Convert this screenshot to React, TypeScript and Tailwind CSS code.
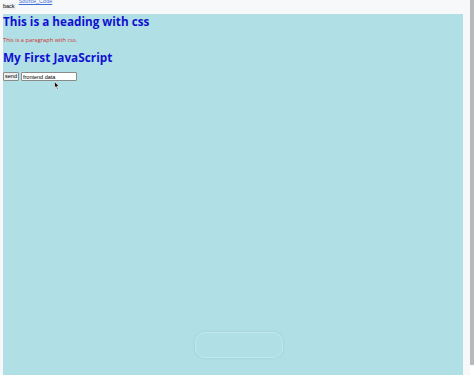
import React from 'react';

export default function App() {
  return (
    <div className="flex h-[375px] w-[474px] overflow-hidden bg-white" style={{ fontFamily: '"Open Sans", "Noto Sans", sans-serif' }}>
      <div className="flex flex-1 flex-col bg-[#f7f8f9]">
        <div className="flex h-[14px] items-start gap-[3px] pl-[2px]" style={{ fontFamily: '"Liberation Sans", sans-serif' }}>
          <button className="mt-[3px] h-[7px] rounded-[1px] bg-[#eef0f1] px-[1px] text-[5.5px] leading-[7px] text-black">
            back
          </button>
          <a className="-mt-[2px] text-[5.5px] leading-[7px] text-[#3b6fd8] underline">
            Source_Code
          </a>
        </div>
        <div className="relative ml-[3px] mr-[7px] flex-1 bg-[#b0e0e6]">
          <h1 className="text-[11.7px] font-bold leading-[15px] text-[#1010d0]">This is a heading with css</h1>
          <p className="mt-[7px] text-[5.7px] leading-[8px] text-[#d03030]">This is a paragraph with css.</p>
          <h2 className="mt-[5px] text-[11.8px] font-bold leading-[16px] text-[#1010d0]">My First JavaScript</h2>
          <div className="mt-[7px] flex items-center gap-[2px]" style={{ fontFamily: '"Liberation Sans", sans-serif' }}>
            <button className="h-[9px] w-[16px] rounded-[1px] border border-[#8a8a8a] bg-[#efefef] p-0 text-[5.5px] leading-[7px] text-black">send</button>
            <input
              readOnly
              value="frontend data"
              className="h-[9px] w-[56px] rounded-[1px] border border-[#8a8a8a] bg-white px-[1px] py-0 text-[5.5px] leading-[7px] text-black outline-none"
            />
          </div>
          <svg className="absolute left-[51px] top-[67px]" width="6" height="9" viewBox="0 0 6 9">
            <path d="M0.5 0.5 L0.5 7 L2 5.6 L3.2 8.3 L4.2 7.9 L3 5.3 L5 5.2 Z" fill="#111" stroke="#fff" strokeWidth="0.6" />
          </svg>
          <div className="absolute left-[192px] top-[318px] h-[26px] w-[88px] rounded-[10px] border border-[#c2e8ec] shadow-[0_0_3px_rgba(120,170,175,0.35)]" />
        </div>
      </div>
      <div className="flex w-[4px] flex-col bg-white">
        <div className="h-[365px] bg-[#b8babd]" />
      </div>
    </div>
  );
}
